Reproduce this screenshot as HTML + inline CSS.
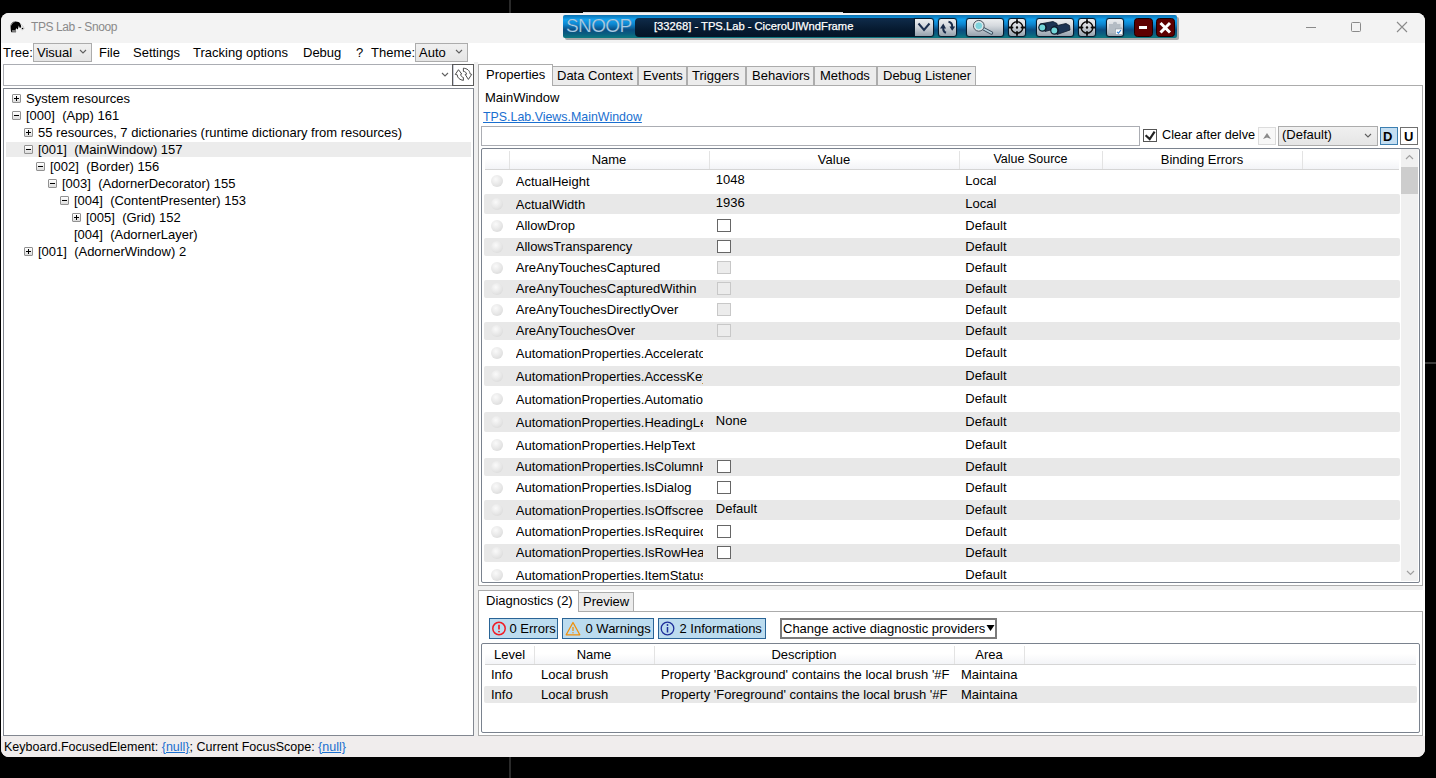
<!DOCTYPE html>
<html><head><meta charset="utf-8">
<style>
*{margin:0;padding:0;box-sizing:border-box}
html,body{width:1436px;height:778px;overflow:hidden;background:#000}
body{position:relative;font-family:"Liberation Sans",sans-serif;font-size:13px;color:#000}
.a{position:absolute}
.t{position:absolute;line-height:13px;white-space:nowrap}
#win{position:absolute;left:1px;top:13px;width:1424px;height:744px;background:#fff;border-radius:8px;overflow:hidden}
.tab{height:20px;border:1px solid #acacac;background:#ececec}
.exp{width:9px;height:9px;border:1px solid #919191;border-radius:1px;background:linear-gradient(#fff,#dcdcdc)}
.dot{width:12px;height:12px;border-radius:50%;background:radial-gradient(circle at 40% 35%,#fafafa 0%,#e6e6e6 55%,#d2d2d2 100%)}
.dbtn{border:1.5px solid #2a6496;background:#bcdcef}
.sbtn{border:1px solid #071a2c;border-radius:3px;background:linear-gradient(#eceef0 0%,#d5d9de 40%,#96a2ad 100%);box-shadow:0 0 1px #02101e}
</style></head><body>
<div class="a" style="left:509px;top:0;width:2px;height:13px;background:#2a2a2a"></div>
<div class="a" style="left:509px;top:756px;width:2px;height:22px;background:#2a2a2a"></div>
<div class="a" style="left:1425px;top:362px;width:11px;height:2px;background:#3a3a3a"></div>
<div class="a" style="left:583px;top:12px;width:260px;height:1px;background:#d8d8d8"></div>
<div id="win">
<div class="a" style="left:-1px;top:-13px;width:1436px;height:778px">
<!-- title bar -->
<div class="a" style="left:0;top:13px;width:1436px;height:30px;background:#f3f3f3"></div>
<svg class="a" style="left:6px;top:17px" width="22" height="18" viewBox="0 0 22 18">
<path d="M4.6 9 C4.6 6.5 7 4.5 9.5 4.6 L12.6 4.9 C14.2 5.6 15.2 7.4 15.2 10.6 L13.6 10.8 L12.8 8.6 L11.8 12.4 L10.4 11.2 L9.6 12.6 L10.2 13.4 L6 13.6 L6.2 14.4 L10.2 14.6 L10 15.2 L5.4 15.2 C4.8 14 4.6 12 4.6 9 Z" fill="#000"/>
<path d="M5 8.5 C5.5 6.5 7 5 9 4.5" stroke="#c8c8c8" stroke-width="0.8" fill="none"/>
<path d="M13.8 6 C15.5 7.5 17.6 9.5 18.2 11.5 C17.6 13 15.8 13.2 14.6 12.2" stroke="#c8c8c8" stroke-width="0.9" fill="none"/>
<circle cx="16.5" cy="11.5" r="0.8" fill="#000"/>
</svg>
<div class="t" style="left:31px;top:21px;font-size:12px;letter-spacing:-0.4px;color:#8a8a8a">TPS Lab - Snoop</div>
<div class="a" style="left:1306px;top:27px;width:10px;height:1px;background:#8a8a8a"></div>
<div class="a" style="left:1351px;top:22px;width:10px;height:10px;border:1px solid #8a8a8a;border-radius:1.5px"></div>
<svg class="a" style="left:1396px;top:21px" width="12" height="12" viewBox="0 0 12 12"><path d="M1 1 L11 11 M11 1 L1 11" stroke="#8a8a8a" stroke-width="1.1"/></svg>

<!-- menu -->
<div class="t" style="left:3px;top:46px">Tree:</div>
<div class="a" style="left:33px;top:43px;width:59px;height:19px;background:linear-gradient(#f0f0f0,#e5e5e5);border:1px solid #acacac"></div>
<div class="t" style="left:37px;top:46px">Visual</div>
<svg class="a" style="left:79px;top:49px" width="8" height="5" viewBox="0 0 8 5"><path d="M1 1 L4 4 L7 1" stroke="#606060" stroke-width="1.1" fill="none"/></svg>
<div class="t" style="left:99px;top:46px">File</div>
<div class="t" style="left:133px;top:46px">Settings</div>
<div class="t" style="left:193px;top:46px">Tracking options</div>
<div class="t" style="left:303px;top:46px">Debug</div>
<div class="t" style="left:356px;top:46px">?</div>
<div class="t" style="left:371px;top:46px">Theme:</div>
<div class="a" style="left:415px;top:43px;width:53px;height:19px;background:linear-gradient(#f0f0f0,#e5e5e5);border:1px solid #acacac"></div>
<div class="t" style="left:419px;top:46px">Auto</div>
<svg class="a" style="left:455px;top:49px" width="8" height="5" viewBox="0 0 8 5"><path d="M1 1 L4 4 L7 1" stroke="#606060" stroke-width="1.1" fill="none"/></svg>

<!-- search box -->
<div class="a" style="left:3px;top:64px;width:451px;height:22px;border:1px solid #abadb3;background:#fff"></div>
<svg class="a" style="left:441px;top:72px" width="8" height="5" viewBox="0 0 8 5"><path d="M1 1 L4 4 L7 1" stroke="#606060" stroke-width="1.1" fill="none"/></svg>
<div class="a" style="left:452px;top:64px;width:22px;height:22px;border:1px solid #5a5a5a;background:#fff"></div><div class="a" style="left:453px;top:65px;width:1px;height:20px;background:#c8ccd8"></div>
<svg class="a" style="left:450px;top:62px" width="26" height="26" viewBox="0 0 26 26">
<path d="M8.5 7.7 L11.7 12 L10.7 12.4 C10.8 14 11.8 15 13.4 15.5 L13.4 18.4 C10 18 7.3 16 7.2 12.8 L5.3 12.4 Z" fill="#fff" stroke="#3a3a3a" stroke-width="0.9" stroke-linejoin="round"/>
<path d="M13.4 6.2 C17 6.4 19.8 8.5 20 11.8 L21.7 12.4 L18.4 17.4 L15.2 12.5 L16.5 12.2 C16.4 10.5 15.3 9.6 13.4 9.4 Z" fill="#fff" stroke="#3a3a3a" stroke-width="0.9" stroke-linejoin="round"/>
</svg>

<!-- tree -->
<div class="a" style="left:3px;top:88px;width:471px;height:648px;border:1px solid #828790;background:#fff"></div>
<div class="a" style="left:6px;top:142px;width:465px;height:15px;background:#ececec"></div>
<div class="a exp" style="left:12px;top:94.0px"></div>
<div class="a" style="left:14px;top:98.0px;width:5px;height:1px;background:#000"></div><div class="a" style="left:16px;top:96.0px;width:1px;height:5px;background:#000"></div>
<div class="t" style="left:26px;top:92.1px">System resources</div>
<div class="a exp" style="left:12px;top:111.0px"></div>
<div class="a" style="left:14px;top:115.0px;width:5px;height:1px;background:#000"></div>
<div class="t" style="left:26px;top:109.1px">[000]&nbsp; (App) 161</div>
<div class="a exp" style="left:24px;top:128.0px"></div>
<div class="a" style="left:26px;top:132.0px;width:5px;height:1px;background:#000"></div><div class="a" style="left:28px;top:130.0px;width:1px;height:5px;background:#000"></div>
<div class="t" style="left:38px;top:126.1px">55 resources, 7 dictionaries (runtime dictionary from resources)</div>
<div class="a exp" style="left:24px;top:145.0px"></div>
<div class="a" style="left:26px;top:149.0px;width:5px;height:1px;background:#000"></div>
<div class="t" style="left:38px;top:143.1px">[001]&nbsp; (MainWindow) 157</div>
<div class="a exp" style="left:36px;top:162.0px"></div>
<div class="a" style="left:38px;top:166.0px;width:5px;height:1px;background:#000"></div>
<div class="t" style="left:50px;top:160.1px">[002]&nbsp; (Border) 156</div>
<div class="a exp" style="left:48px;top:179.0px"></div>
<div class="a" style="left:50px;top:183.0px;width:5px;height:1px;background:#000"></div>
<div class="t" style="left:62px;top:177.1px">[003]&nbsp; (AdornerDecorator) 155</div>
<div class="a exp" style="left:60px;top:196.0px"></div>
<div class="a" style="left:62px;top:200.0px;width:5px;height:1px;background:#000"></div>
<div class="t" style="left:74px;top:194.1px">[004]&nbsp; (ContentPresenter) 153</div>
<div class="a exp" style="left:72px;top:213.0px"></div>
<div class="a" style="left:74px;top:217.0px;width:5px;height:1px;background:#000"></div><div class="a" style="left:76px;top:215.0px;width:1px;height:5px;background:#000"></div>
<div class="t" style="left:86px;top:211.1px">[005]&nbsp; (Grid) 152</div>
<div class="t" style="left:74px;top:228.1px">[004]&nbsp; (AdornerLayer)</div>
<div class="a exp" style="left:24px;top:247.0px"></div>
<div class="a" style="left:26px;top:251.0px;width:5px;height:1px;background:#000"></div><div class="a" style="left:28px;top:249.0px;width:1px;height:5px;background:#000"></div>
<div class="t" style="left:38px;top:245.1px">[001]&nbsp; (AdornerWindow) 2</div>

<!-- splitter -->
<div class="a" style="left:474px;top:62px;width:4px;height:674px;background:#f0f0f0"></div>

<!-- status bar -->
<div class="a" style="left:0;top:736px;width:1436px;height:21px;background:#f0eded"></div>
<div class="t" style="left:4px;top:741px;font-size:12.5px">Keyboard.FocusedElement: <span style="color:#1a6fd0;text-decoration:underline">{null}</span>; Current FocusScope: <span style="color:#1a6fd0;text-decoration:underline">{null}</span></div>
<!-- tabs -->
<div class="a" style="left:478px;top:85px;width:945px;height:501px;border:1px solid #acacac;background:#fff"></div>
<div class="a tab" style="left:552px;top:66px;width:86px"></div>
<div class="a tab" style="left:638px;top:66px;width:49px"></div>
<div class="a tab" style="left:687px;top:66px;width:59px"></div>
<div class="a tab" style="left:746px;top:66px;width:68px"></div>
<div class="a tab" style="left:814px;top:66px;width:63px"></div>
<div class="a tab" style="left:877px;top:66px;width:99px"></div>
<div class="a" style="left:478px;top:64px;width:75px;height:22px;border:1px solid #acacac;border-bottom:none;background:#fff"></div>
<div class="t" style="left:486px;top:68px">Properties</div>
<div class="t" style="left:557px;top:69px">Data Context</div>
<div class="t" style="left:643px;top:69px">Events</div>
<div class="t" style="left:692px;top:69px">Triggers</div>
<div class="t" style="left:752px;top:69px">Behaviors</div>
<div class="t" style="left:820px;top:69px">Methods</div>
<div class="t" style="left:883px;top:69px">Debug Listener</div>

<div class="t" style="left:485px;top:91px">MainWindow</div>
<div class="t" style="left:483px;top:111px;font-size:12.4px;color:#1a6fd0;text-decoration:underline">TPS.Lab.Views.MainWindow</div>

<!-- filter row -->
<div class="a" style="left:481px;top:126px;width:659px;height:20px;border:1px solid #abadb3;background:#fff"></div>
<div class="a" style="left:1143px;top:129px;width:14px;height:13px;border:1px solid #555;background:#fff"></div>
<svg class="a" style="left:1143px;top:129px" width="14" height="13" viewBox="0 0 14 13"><path d="M2.6 6.2 L6.7 10 L11.6 2.7" stroke="#222" stroke-width="2.2" fill="none"/></svg>
<div class="t" style="left:1162px;top:129px;font-size:12.7px">Clear after delve</div>
<div class="a" style="left:1258px;top:127px;width:18px;height:18px;border:1px solid #dcdcdc;background:#f8f8f8"></div>
<svg class="a" style="left:1263px;top:133px" width="8" height="6" viewBox="0 0 8 6"><path d="M0 6 L4 0 L8 6 L4 4.6 Z" fill="#8a8a8a"/></svg>
<div class="a" style="left:1278px;top:126px;width:100px;height:20px;border:1px solid #acacac;background:linear-gradient(#f0f0f0,#e5e5e5)"></div>
<div class="t" style="left:1282px;top:128px">(Default)</div>
<svg class="a" style="left:1364px;top:133px" width="8" height="5" viewBox="0 0 8 5"><path d="M1 1 L4 4 L7 1" stroke="#606060" stroke-width="1.1" fill="none"/></svg>
<div class="a" style="left:1380px;top:127px;width:18px;height:18px;border:1px solid #3c7fb1;background:#c4def2"></div>
<div class="t" style="left:1383px;top:130px;font-weight:bold;font-size:13px">D</div>
<div class="a" style="left:1400px;top:127px;width:18px;height:18px;border:1px solid #707070;background:#fff"></div>
<div class="t" style="left:1404px;top:130px;font-weight:bold;font-size:13px">U</div>

<!-- grid -->
<div class="a" style="left:481px;top:148px;width:939px;height:435px;border:1px solid #7a828e;border-radius:2px;background:#fff"></div>
<div class="a" style="left:485px;top:150px;width:914px;height:20px;background:linear-gradient(#fff 0%,#fff 45%,#f3f4f7 100%);border-bottom:1px solid #d5d5d5"></div>
<div class="a" style="left:509px;top:151px;width:1px;height:18px;background:#e3e3e3"></div>
<div class="a" style="left:709px;top:151px;width:1px;height:18px;background:#e3e3e3"></div>
<div class="a" style="left:959px;top:151px;width:1px;height:18px;background:#e3e3e3"></div>
<div class="a" style="left:1102px;top:151px;width:1px;height:18px;background:#e3e3e3"></div>
<div class="a" style="left:1302px;top:151px;width:1px;height:18px;background:#e3e3e3"></div>
<div class="t" style="left:509px;width:200px;text-align:center;top:153px">Name</div>
<div class="t" style="left:709px;width:250px;text-align:center;top:153px">Value</div>
<div class="t" style="left:959px;width:143px;text-align:center;top:153px;font-size:12.5px">Value Source</div>
<div class="t" style="left:1102px;width:200px;text-align:center;top:153px">Binding Errors</div>
<!-- scrollbar -->
<div class="a" style="left:1401px;top:149px;width:17px;height:432px;background:#f0f0f0"></div>
<div class="a" style="left:1401px;top:167px;width:17px;height:27px;background:#cdcdcd"></div>
<svg class="a" style="left:1405px;top:154px" width="9" height="6" viewBox="0 0 9 6"><path d="M1 5 L4.5 1.5 L8 5" stroke="#a0a0a0" stroke-width="1.2" fill="none"/></svg>
<svg class="a" style="left:1406px;top:570px" width="9" height="6" viewBox="0 0 9 6"><path d="M1 1 L4.5 4.5 L8 1" stroke="#a0a0a0" stroke-width="1.2" fill="none"/></svg>
<div class="a" style="left:484px;top:170px;width:916px;height:412px;overflow:hidden">
<div class="a dot" style="left:7px;top:5.0px"></div>
<div class="t" style="left:31.8px;top:5.0px;width:187.7px;height:17px;overflow:hidden">ActualHeight</div>
<div class="t" style="left:231.8px;top:3.0px">1048</div>
<div class="t" style="left:481.3px;top:4.0px">Local</div>
<div class="a" style="left:0;top:24.0px;width:916px;height:20.0px;background:#e8e8e8;border-radius:2px"></div>
<div class="a dot" style="left:7px;top:28.0px"></div>
<div class="t" style="left:31.8px;top:28.0px;width:187.7px;height:17px;overflow:hidden">ActualWidth</div>
<div class="t" style="left:231.8px;top:26.0px">1936</div>
<div class="t" style="left:481.3px;top:27.0px">Local</div>
<div class="a dot" style="left:7px;top:50.0px"></div>
<div class="t" style="left:31.8px;top:49.0px;width:187.7px;height:17px;overflow:hidden">AllowDrop</div>
<div class="a" style="left:233px;top:49.0px;width:14px;height:13px;border:1px solid #666;background:#fff"></div>
<div class="t" style="left:481.3px;top:49.0px">Default</div>
<div class="a" style="left:0;top:68.0px;width:916px;height:18.0px;background:#e8e8e8;border-radius:2px"></div>
<div class="a dot" style="left:7px;top:71.0px"></div>
<div class="t" style="left:31.8px;top:70.0px;width:187.7px;height:17px;overflow:hidden">AllowsTransparency</div>
<div class="a" style="left:233px;top:70.0px;width:14px;height:13px;border:1px solid #666;background:#fff"></div>
<div class="t" style="left:481.3px;top:70.0px">Default</div>
<div class="a dot" style="left:7px;top:92.0px"></div>
<div class="t" style="left:31.8px;top:91.0px;width:187.7px;height:17px;overflow:hidden">AreAnyTouchesCaptured</div>
<div class="a" style="left:233px;top:91.0px;width:14px;height:13px;border:1px solid #c8c8c8;background:#ececec"></div>
<div class="t" style="left:481.3px;top:91.0px">Default</div>
<div class="a" style="left:0;top:110.0px;width:916px;height:18.0px;background:#e8e8e8;border-radius:2px"></div>
<div class="a dot" style="left:7px;top:113.0px"></div>
<div class="t" style="left:31.8px;top:112.0px;width:187.7px;height:17px;overflow:hidden">AreAnyTouchesCapturedWithin</div>
<div class="a" style="left:233px;top:112.0px;width:14px;height:13px;border:1px solid #c8c8c8;background:#ececec"></div>
<div class="t" style="left:481.3px;top:112.0px">Default</div>
<div class="a dot" style="left:7px;top:134.0px"></div>
<div class="t" style="left:31.8px;top:133.0px;width:187.7px;height:17px;overflow:hidden">AreAnyTouchesDirectlyOver</div>
<div class="a" style="left:233px;top:133.0px;width:14px;height:13px;border:1px solid #c8c8c8;background:#ececec"></div>
<div class="t" style="left:481.3px;top:133.0px">Default</div>
<div class="a" style="left:0;top:152.0px;width:916px;height:18.0px;background:#e8e8e8;border-radius:2px"></div>
<div class="a dot" style="left:7px;top:155.0px"></div>
<div class="t" style="left:31.8px;top:154.0px;width:187.7px;height:17px;overflow:hidden">AreAnyTouchesOver</div>
<div class="a" style="left:233px;top:154.0px;width:14px;height:13px;border:1px solid #c8c8c8;background:#ececec"></div>
<div class="t" style="left:481.3px;top:154.0px">Default</div>
<div class="a dot" style="left:7px;top:177.0px"></div>
<div class="t" style="left:31.8px;top:177.0px;width:187.7px;height:17px;overflow:hidden">AutomationProperties.AcceleratorKey</div>
<div class="t" style="left:481.3px;top:176.0px">Default</div>
<div class="a" style="left:0;top:196.0px;width:916px;height:20.0px;background:#e8e8e8;border-radius:2px"></div>
<div class="a dot" style="left:7px;top:200.0px"></div>
<div class="t" style="left:31.8px;top:200.0px;width:187.7px;height:17px;overflow:hidden">AutomationProperties.AccessKey</div>
<div class="t" style="left:481.3px;top:199.0px">Default</div>
<div class="a dot" style="left:7px;top:223.0px"></div>
<div class="t" style="left:31.8px;top:223.0px;width:187.7px;height:17px;overflow:hidden">AutomationProperties.AutomationId</div>
<div class="t" style="left:481.3px;top:222.0px">Default</div>
<div class="a" style="left:0;top:242.0px;width:916px;height:20.0px;background:#e8e8e8;border-radius:2px"></div>
<div class="a dot" style="left:7px;top:246.0px"></div>
<div class="t" style="left:31.8px;top:246.0px;width:187.7px;height:17px;overflow:hidden">AutomationProperties.HeadingLevel</div>
<div class="t" style="left:231.8px;top:244.0px">None</div>
<div class="t" style="left:481.3px;top:245.0px">Default</div>
<div class="a dot" style="left:7px;top:269.0px"></div>
<div class="t" style="left:31.8px;top:269.0px;width:187.7px;height:17px;overflow:hidden">AutomationProperties.HelpText</div>
<div class="t" style="left:481.3px;top:268.0px">Default</div>
<div class="a" style="left:0;top:288.0px;width:916px;height:18.0px;background:#e8e8e8;border-radius:2px"></div>
<div class="a dot" style="left:7px;top:291.0px"></div>
<div class="t" style="left:31.8px;top:290.0px;width:187.7px;height:17px;overflow:hidden">AutomationProperties.IsColumnHeader</div>
<div class="a" style="left:233px;top:290.0px;width:14px;height:13px;border:1px solid #666;background:#fff"></div>
<div class="t" style="left:481.3px;top:290.0px">Default</div>
<div class="a dot" style="left:7px;top:312.0px"></div>
<div class="t" style="left:31.8px;top:311.0px;width:187.7px;height:17px;overflow:hidden">AutomationProperties.IsDialog</div>
<div class="a" style="left:233px;top:311.0px;width:14px;height:13px;border:1px solid #666;background:#fff"></div>
<div class="t" style="left:481.3px;top:311.0px">Default</div>
<div class="a" style="left:0;top:330.0px;width:916px;height:20.0px;background:#e8e8e8;border-radius:2px"></div>
<div class="a dot" style="left:7px;top:334.0px"></div>
<div class="t" style="left:31.8px;top:334.0px;width:187.7px;height:17px;overflow:hidden">AutomationProperties.IsOffscreenBehavior</div>
<div class="t" style="left:231.8px;top:332.0px">Default</div>
<div class="t" style="left:481.3px;top:333.0px">Default</div>
<div class="a dot" style="left:7px;top:356.0px"></div>
<div class="t" style="left:31.8px;top:355.0px;width:187.7px;height:17px;overflow:hidden">AutomationProperties.IsRequiredForForm</div>
<div class="a" style="left:233px;top:355.0px;width:14px;height:13px;border:1px solid #666;background:#fff"></div>
<div class="t" style="left:481.3px;top:355.0px">Default</div>
<div class="a" style="left:0;top:374.0px;width:916px;height:18.0px;background:#e8e8e8;border-radius:2px"></div>
<div class="a dot" style="left:7px;top:377.0px"></div>
<div class="t" style="left:31.8px;top:376.0px;width:187.7px;height:17px;overflow:hidden">AutomationProperties.IsRowHeader</div>
<div class="a" style="left:233px;top:376.0px;width:14px;height:13px;border:1px solid #666;background:#fff"></div>
<div class="t" style="left:481.3px;top:376.0px">Default</div>
<div class="a dot" style="left:7px;top:399.0px"></div>
<div class="t" style="left:31.8px;top:399.0px;width:187.7px;height:17px;overflow:hidden">AutomationProperties.ItemStatus</div>
<div class="t" style="left:481.3px;top:398.0px">Default</div>
</div>
<!-- horizontal splitter -->
<div class="a" style="left:478px;top:586px;width:945px;height:4px;background:#f0f0f0"></div>
<!-- diagnostics -->
<div class="a" style="left:478px;top:611px;width:945px;height:125px;border:1px solid #acacac;background:#fff"></div>
<div class="a tab" style="left:578px;top:592px;width:56px;height:20px"></div>
<div class="a" style="left:478px;top:590px;width:101px;height:22px;border:1px solid #acacac;border-bottom:none;background:#fff"></div>
<div class="t" style="left:486px;top:594px">Diagnostics (2)</div>
<div class="t" style="left:583px;top:595px">Preview</div>

<div class="a dbtn" style="left:489px;top:618px;width:69px;height:21px"></div>
<div class="a dbtn" style="left:562px;top:618px;width:92px;height:21px"></div>
<div class="a dbtn" style="left:658px;top:618px;width:108px;height:21px"></div>
<svg class="a" style="left:491px;top:620.5px" width="16" height="16" viewBox="0 0 16 16"><circle cx="8" cy="7.5" r="6.2" stroke="#f01c24" stroke-width="1.5" fill="none"/><path d="M8 3.8 L8 8.4" stroke="#f01c24" stroke-width="1.7"/><circle cx="8" cy="10.6" r="0.95" fill="#f01c24"/></svg>
<div class="t" style="left:509.5px;top:622px">0 Errors</div>
<svg class="a" style="left:565px;top:621px" width="16" height="15" viewBox="0 0 16 15"><path d="M8 1.5 L14.8 13.8 L1.2 13.8 Z" stroke="#f0900a" stroke-width="1.3" fill="none" stroke-linejoin="round"/><path d="M8 6 L8 10" stroke="#f0900a" stroke-width="1.3"/><circle cx="8" cy="11.8" r="0.7" fill="#f0900a"/></svg>
<div class="t" style="left:585.5px;top:622px">0 Warnings</div>
<svg class="a" style="left:660px;top:621px" width="15" height="15" viewBox="0 0 15 15"><circle cx="7.5" cy="7.5" r="6.3" stroke="#1e2e9a" stroke-width="1.3" fill="none"/><path d="M7.5 6 L7.5 11.5" stroke="#1e2e9a" stroke-width="1.5"/><circle cx="7.5" cy="4" r="0.9" fill="#1e2e9a"/></svg>
<div class="t" style="left:679.5px;top:622px">2 Informations</div>

<div class="a" style="left:780px;top:618px;width:217px;height:20.5px;border:2px solid #7a7a7a;background:#fff;box-shadow:inset 0 0 0 0 #fff"></div>
<div class="t" style="left:783px;top:622px">Change active diagnostic providers</div>
<svg class="a" style="left:986px;top:624px" width="9" height="8" viewBox="0 0 9 8"><path d="M0.5 1 L8.5 1 L4.5 7 Z" fill="#000"/></svg>

<div class="a" style="left:481px;top:643px;width:939px;height:90px;border:1px solid #7a828e;border-radius:2px;background:#fff"></div>
<div class="a" style="left:485px;top:645px;width:931px;height:20px;background:linear-gradient(#fff 0%,#fff 45%,#f3f4f7 100%);border-bottom:1px solid #d5d5d5"></div>
<div class="a" style="left:534px;top:646px;width:1px;height:18px;background:#e3e3e3"></div>
<div class="a" style="left:654px;top:646px;width:1px;height:18px;background:#e3e3e3"></div>
<div class="a" style="left:954px;top:646px;width:1px;height:18px;background:#e3e3e3"></div>
<div class="a" style="left:1024px;top:646px;width:1px;height:18px;background:#e3e3e3"></div>
<div class="t" style="left:485px;width:49px;text-align:center;top:648px">Level</div>
<div class="t" style="left:534px;width:120px;text-align:center;top:648px">Name</div>
<div class="t" style="left:654px;width:300px;text-align:center;top:648px">Description</div>
<div class="t" style="left:954px;width:70px;text-align:center;top:648px">Area</div>
<div class="a" style="left:484px;top:686px;width:933px;height:17px;background:#e8e8e8;border-radius:2px"></div>
<div class="t" style="left:491px;top:668px">Info</div>
<div class="t" style="left:541px;top:668px">Local brush</div>
<div class="t" style="left:661px;top:668px">Property 'Background' contains the local brush '#F</div>
<div class="t" style="left:961px;top:668px">Maintaina</div>
<div class="t" style="left:491px;top:688px">Info</div>
<div class="t" style="left:541px;top:688px">Local brush</div>
<div class="t" style="left:661px;top:688px">Property 'Foreground' contains the local brush '#F</div>
<div class="t" style="left:961px;top:688px">Maintaina</div>
<!-- snoop toolbar -->
<div class="a" style="left:565px;top:17px;width:614px;height:23px;background:#a8a8a8;border-radius:2px"></div>
<div class="a" style="left:563px;top:15px;width:614px;height:23px;background:linear-gradient(#0a6fae 0%,#13a2ef 20%,#0d86d0 40%,#0a4d80 65%,#0a5e80 82%,#0c7a80 100%);border-radius:2px"></div>
<div class="t" style="left:566px;top:16px;font-size:19px;line-height:19px;color:#a9cbe3;letter-spacing:-0.6px;-webkit-text-stroke:0.15px #0a5a90">SNOOP</div>
<div class="a" style="left:635px;top:17.5px;width:281px;height:19px;background:linear-gradient(#0f2b4a,#061a30 60%,#041528);border-radius:4px 0 0 4px"></div>
<div class="t" style="left:654px;top:20px;font-size:11.2px;color:#fff;-webkit-text-stroke:0.25px #fff">[33268] - TPS.Lab - CiceroUIWndFrame</div>
<div class="a sbtn" style="left:914px;top:17.5px;width:20px;height:19px;border-radius:0 3px 3px 0"></div>
<svg class="a" style="left:917px;top:22px" width="14" height="10" viewBox="0 0 14 10"><path d="M1.5 1.5 L7 8 L12.5 1.5" stroke="#1c2f4f" stroke-width="2" fill="none"/></svg>
<div class="a sbtn" style="left:937.5px;top:17.5px;width:19px;height:19px"></div>
<svg class="a" style="left:937.5px;top:17.5px" width="19" height="19" viewBox="0 0 19 19">
<path d="M8 14.8 C5.5 14 5 12 5.3 9" stroke="#1a2c4a" stroke-width="2" fill="none"/><path d="M2 10.5 L5.3 5.5 L8 10.5 Z" fill="#1a2c4a"/>
<path d="M10.5 3.8 C13.5 4.3 14.3 6 14.2 9" stroke="#1a2c4a" stroke-width="2" fill="none"/><path d="M11.5 8.5 L14.2 12.8 L17.2 8.5 Z" fill="#1a2c4a"/>
</svg>
<div class="a sbtn" style="left:966px;top:17.5px;width:38px;height:19px"></div>
<svg class="a" style="left:966px;top:17.5px" width="38" height="19" viewBox="0 0 38 19">
<path d="M17 10.5 L25.5 15" stroke="#3a4a5a" stroke-width="3.4" stroke-linecap="round"/><path d="M17 10.5 L25.5 15" stroke="#b8d4e0" stroke-width="1.6" stroke-linecap="round"/>
<circle cx="12.8" cy="7.8" r="5.4" fill="#d8dde0" stroke="#4a5560" stroke-width="1"/>
<circle cx="12.8" cy="7.8" r="3.9" fill="#7fd3dc" stroke="#e8f0f2" stroke-width="0.8"/>
</svg>
<div class="a sbtn" style="left:1008px;top:17.5px;width:18px;height:19px"></div>
<svg class="a" style="left:1008px;top:17.5px" width="18" height="19" viewBox="0 0 18 19"><circle cx="9" cy="9.5" r="5.8" stroke="#0a0a0a" stroke-width="1.4" fill="none"/><path d="M9 2 L9 5 M9 14 L9 17 M1.5 9.5 L4.5 9.5 M13.5 9.5 L16.5 9.5" stroke="#0a0a0a" stroke-width="1.8" stroke-linecap="round"/><circle cx="9" cy="9.5" r="1.2" fill="#0a0a0a"/></svg>
<div class="a sbtn" style="left:1036px;top:17.5px;width:38px;height:19px"></div>
<svg class="a" style="left:1036px;top:17.5px" width="38" height="19" viewBox="0 0 38 19">
<path d="M4 6 L17 3.5 L21 5.5 L22 10 L9 13.5 Z" fill="#1d3554" stroke="#0c1a2c" stroke-width="0.8"/>
<path d="M17 8.5 L30 5.5 L33.5 7.5 L34 12 L21 16.5 Z" fill="#1d3554" stroke="#0c1a2c" stroke-width="0.8"/>
<circle cx="6.5" cy="9.5" r="4.3" fill="#0d1a2b"/><circle cx="6.3" cy="9.5" r="2.9" fill="#72d6d8"/>
<circle cx="18.5" cy="12.5" r="4.3" fill="#0d1a2b"/><circle cx="18.3" cy="12.5" r="2.9" fill="#72d6d8"/>
</svg>
<div class="a sbtn" style="left:1078px;top:17.5px;width:18px;height:19px"></div>
<svg class="a" style="left:1078px;top:17.5px" width="18" height="19" viewBox="0 0 18 19"><circle cx="9" cy="9.5" r="5.8" stroke="#0a0a0a" stroke-width="1.4" fill="none"/><path d="M9 2 L9 5 M9 14 L9 17 M1.5 9.5 L4.5 9.5 M13.5 9.5 L16.5 9.5" stroke="#0a0a0a" stroke-width="1.8" stroke-linecap="round"/><circle cx="9" cy="9.5" r="1.2" fill="#0a0a0a"/></svg>
<div class="a sbtn" style="left:1106px;top:17.5px;width:18px;height:19px"></div>
<svg class="a" style="left:1106px;top:17.5px" width="18" height="19" viewBox="0 0 18 19"><path d="M3 6 L7 6 C6.5 3 11.5 3 11 6 L14.5 6 L14.5 9 C17 8.5 17 13 14.5 12.5 L14.5 15 L3 15 Z" fill="#b4bcc4"/><rect x="9.5" y="11" width="7" height="5.5" fill="#fff" stroke="#8a96a0" stroke-width=".6"/><path d="M11 13.8 L12.5 15.2 L15 12" stroke="#2a80d8" stroke-width="1.1" fill="none"/></svg>
<div class="a" style="left:1134px;top:17.5px;width:18.5px;height:19px;background:#5e0000;border-radius:3.5px;border:1px solid #1a0000"></div>
<div class="a" style="left:1139px;top:26px;width:8px;height:3px;background:#fff"></div>
<div class="a" style="left:1156px;top:17.5px;width:18.5px;height:19px;background:#5e0000;border-radius:3.5px;border:1px solid #1a0000"></div>
<svg class="a" style="left:1156px;top:17.5px" width="19" height="19" viewBox="0 0 19 19"><path d="M4.5 5 L14 14.5 M14 5 L4.5 14.5" stroke="#fff" stroke-width="3"/></svg>
</div>

</div>
</body></html>
